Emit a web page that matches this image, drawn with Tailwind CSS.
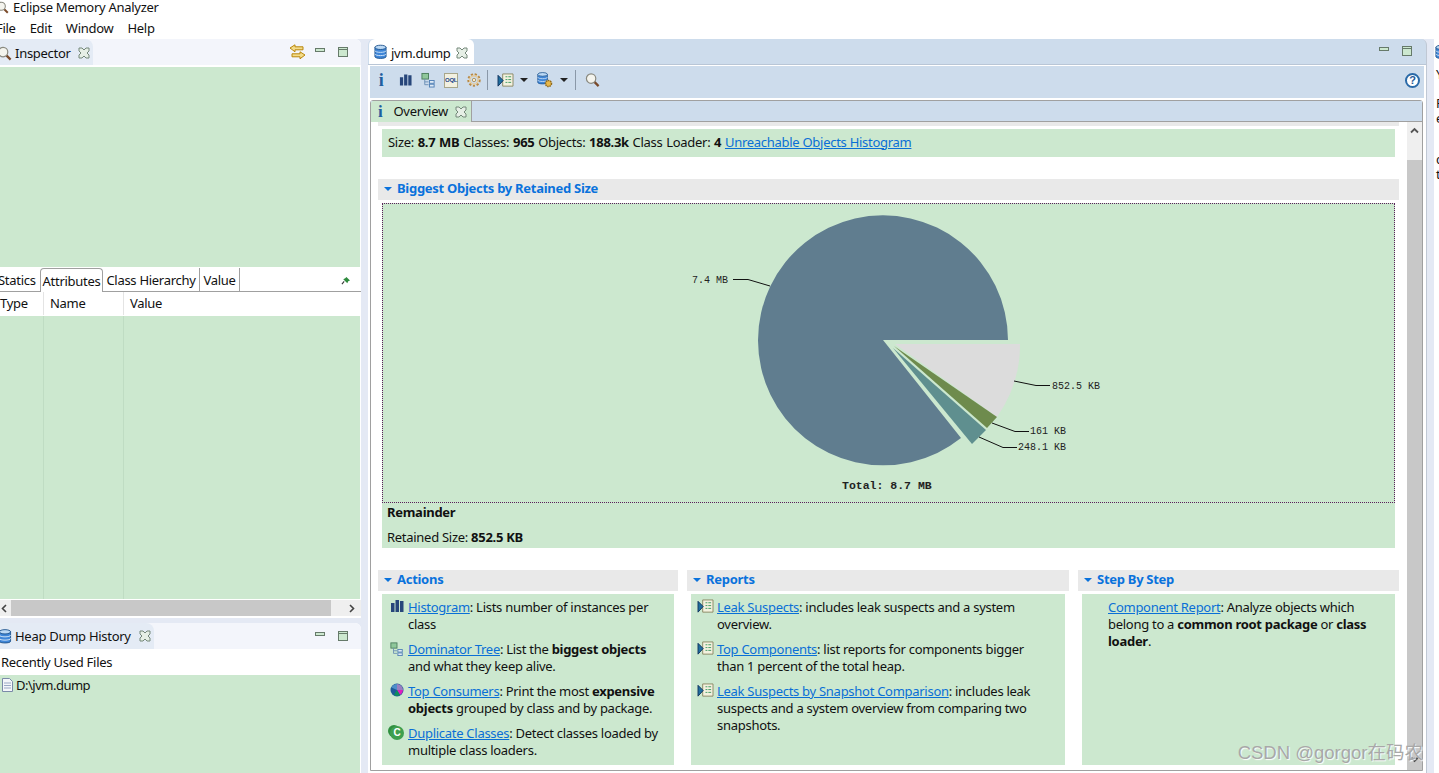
<!DOCTYPE html>
<html lang="en">
<head>
<meta charset="UTF-8">
<title>Eclipse Memory Analyzer</title>
<script src="https://cdn.jsdelivr.net/npm/@tailwindcss/browser@4"></script>
</head>
<body class="w-[1439px] h-[773px] overflow-hidden bg-[#e4e9f4] relative font-['Noto_Sans',sans-serif] text-[13px] leading-[17px] tracking-[-0.28px] text-[#111]">

<svg class="hidden">
  <symbol id="ic-close" viewBox="0 0 12 12"><path d="M1 1h3l2 2 2-2h3v3L9 6l2 2v3H8L6 9l-2 2H1V8l2-2-2-2z" fill="#e6efe6" stroke="#75887a"/></symbol>
  <symbol id="ic-bars" viewBox="0 0 14 14"><path d="M1 4h3.500v9H1zM5.500 1H9v12H5.500zM10 2h3.500v11H10z" fill="#27467a"/></symbol>
  <symbol id="ic-tree" viewBox="0 0 16 16"><rect x="1" y="1" width="7" height="6" fill="#8fc79a" stroke="#4b7d5c"/><path d="M4 7v6h4M4 10h4" fill="none" stroke="#6b8fb5"/><rect x="9" y="8.500" width="5" height="3" fill="#dfeaf5" stroke="#4f7fb5"/><rect x="9" y="12.500" width="5" height="3" fill="#dfeaf5" stroke="#4f7fb5"/></symbol>
  <symbol id="ic-report" viewBox="0 0 18 16"><path d="M6 1h11v13H6z" fill="#f3f1df" stroke="#8a8763"/><path d="M9 4h2M12 4h3M9 7h2M12 7h3M9 10h2M12 10h3" stroke="#3d9a60"/><path d="M1 2.500 6.500 8 1 14z" fill="#1f6f9f" stroke="#12335e"/></symbol>
  <symbol id="ic-db" viewBox="0 0 14 16"><path d="M1 3v10c0 2.500 12 2.500 12 0V3z" fill="#3f86d8" stroke="#20558f"/><ellipse cx="7" cy="3" rx="6" ry="2.300" fill="#bcd9f5" stroke="#20558f"/><path d="M1 6.500c0 2.500 12 2.500 12 0M1 10c0 2.500 12 2.500 12 0" fill="none" stroke="#d5e7f8"/></symbol>
  <symbol id="ic-lens" viewBox="0 0 16 16"><path d="m9.500 9.500 5 5" stroke="#7a4a2a" stroke-width="2.400"/><circle cx="6.500" cy="6.500" r="5" fill="#f4f4ee" stroke="#8a8a80" stroke-width="1.300"/></symbol>
  <symbol id="ic-gear" viewBox="0 0 16 16"><circle cx="8" cy="8" r="5.200" fill="none" stroke="#b98a45" stroke-width="3" stroke-dasharray="2 1.500"/><circle cx="8" cy="8" r="4.200" fill="none" stroke="#e6cfa4" stroke-width="1.500"/><circle cx="8" cy="8" r="1.700" fill="#f6ecd2" stroke="#9a7a3a" stroke-width=".7"/></symbol>
  <symbol id="ic-min" viewBox="0 0 11 6"><rect x=".5" y="1.500" width="9" height="3" fill="#cce8cf" stroke="#667a6a"/></symbol>
  <symbol id="ic-max" viewBox="0 0 11 11"><rect x=".5" y=".5" width="9" height="9" fill="#cce8cf" stroke="#667a6a"/><path d="M.5 2.500h9" stroke="#667a6a"/></symbol>
</svg>

<header class="h-[39px] bg-white">
  <div class="h-[15px] flex items-center gap-[4px] -ml-[4px]">
    <svg class="w-[13px] h-[13px]"><use href="#ic-lens"/></svg>
    <span>Eclipse Memory Analyzer</span>
  </div>
  <nav class="h-[24px] pt-[5px] -ml-[4px] flex gap-[14px]"><span>File</span><span>Edit</span><span>Window</span><span>Help</span></nav>
</header>

<div class="h-[734px] flex">
  <!-- left column -->
  <div class="w-[361px] shrink-0 flex flex-col gap-[5px]">
    <section class="h-[579px] bg-white rounded-tr-[6px] flex flex-col overflow-hidden">
      <div class="h-[26px] bg-[#f3f5fb] flex items-stretch pr-[12px] shrink-0">
        <div class="w-[96px] bg-[#e4ebf5] rounded-tr-[8px] flex items-center gap-[3px] -ml-[3px] pt-[2px]">
          <svg class="w-[15px] h-[15px]"><use href="#ic-lens"/></svg>
          <span>Inspector</span>
          <svg class="w-[12px] h-[12px] ml-[4px]"><use href="#ic-close"/></svg>
        </div>
        <div class="ml-auto flex items-center">
          <svg class="w-[17px] h-[16px]" viewBox="0 0 17 16"><path d="M1 4 6 .8v2h8v3H6v2zM16 11l-5-3.200v2H3v3h8v2z" fill="#f3dc8a" stroke="#b8860b"/></svg>
          <svg class="w-[11px] h-[6px] ml-[9px] -mt-[5px]"><use href="#ic-min"/></svg>
          <svg class="w-[11px] h-[11px] ml-[12px]"><use href="#ic-max"/></svg>
        </div>
      </div>
      <div class="h-[2px] shrink-0"></div>
      <div class="h-[200px] bg-[#cce8cf] mr-[1px] shrink-0"></div>
      <div class="h-[25px] shrink-0 flex items-end border-b border-[#a0a0a0] relative">
        <span class="w-[42px] h-[23px] pt-[2px] flex items-center -ml-[2px] relative">Statics</span>
        <span class="w-[63px] h-[24px] -mb-[1px] pt-[1px] bg-white border border-b-0 border-[#a0a0a0] rounded-t-[4px] flex items-center justify-center">Attributes</span>
        <span class="w-[97px] h-[23px] pt-[2px] border-r border-[#a0a0a0] flex items-center justify-center">Class Hierarchy</span>
        <span class="w-[40px] h-[23px] pt-[2px] border-r border-[#a0a0a0] flex items-center justify-center">Value</span>
        <svg class="ml-auto mr-[11px] mb-[6px] w-[9px] h-[9px]" viewBox="0 0 10 10"><path d="M6 1 10 5 8 5.800 7 8 2.500 3.500 4.700 2.500z" fill="#2e8b3d"/><path d="M3.500 6 1 9" stroke="#333" stroke-width="1.200"/></svg>
      </div>
      <div class="h-[24px] pb-[1px] shrink-0 flex">
        <span class="w-[44px] border-r border-[#e4e4e4] flex items-center">Type</span>
        <span class="w-[80px] border-r border-[#e4e4e4] flex items-center pl-[6px]">Name</span>
        <span class="flex-1 flex items-center pl-[6px]">Value</span>
      </div>
      <div class="h-[283px] shrink-0 mr-[1px] bg-[#cce8cf] flex">
        <div class="w-[44px] border-r border-[#bfdcc3]"></div>
        <div class="w-[80px] border-r border-[#bfdcc3]"></div>
      </div>
      <div class="h-[16px] mt-[1px] shrink-0 bg-[#efefef] flex items-center">
        <svg class="w-[11px] h-[11px] shrink-0" viewBox="0 0 11 11"><path d="M6 2 2.500 5.500 6 9" fill="none" stroke="#444" stroke-width="1.600"/></svg>
        <div class="w-[320px] h-full bg-[#c8c8c8]"></div>
        <svg class="w-[11px] h-[11px] ml-[16px]" viewBox="0 0 11 11"><path d="M3 2l3.500 3.500L3 9" fill="none" stroke="#444" stroke-width="1.600"/></svg>
      </div>
    </section>
    <section class="h-[150px] bg-white rounded-tr-[6px] flex flex-col overflow-hidden">
      <div class="h-[26px] bg-[#f3f5fb] flex items-stretch pr-[12px] shrink-0">
        <div class="w-[157px] bg-[#e4ebf5] rounded-tr-[8px] flex items-center gap-[2px] -ml-[3px]">
          <svg class="w-[16px] h-[15px]" viewBox="0 0 14 16"><use href="#ic-db"/></svg>
          <span>Heap Dump History</span>
          <svg class="w-[12px] h-[12px] ml-[6px]"><use href="#ic-close"/></svg>
        </div>
        <div class="ml-auto flex items-center">
          <svg class="w-[11px] h-[6px] -mt-[5px]"><use href="#ic-min"/></svg>
          <svg class="w-[11px] h-[11px] ml-[12px]"><use href="#ic-max"/></svg>
        </div>
      </div>
      <div class="h-[26px] flex items-center pl-[1px] shrink-0">Recently Used Files</div>
      <div class="flex-1 bg-[#cce8cf] mr-[1px] pt-[2px] flex items-start gap-[3px] pl-[2px]">
        <svg class="w-[11px] h-[14px] mt-[1px] shrink-0" viewBox="0 0 11 14"><path d="M.5.500h7l3 3v10H.500z" fill="#f4f6fa" stroke="#7b8aa8"/><path d="M2 5h7M2 7.500h7M2 10h7" stroke="#9aa8c4"/></svg>
        <span class="leading-[17px] tracking-[-0.5px]">D:\jvm.dump</span>
      </div>
    </section>
  </div>

  <!-- editor -->
  <main class="w-[1059px] ml-[7px] shrink-0 bg-[#cddcec] rounded-t-[6px] flex flex-col border-r border-[#c0c8d4] overflow-hidden">
    <div class="h-[26px] shrink-0 flex items-stretch pr-[13px] border-b border-[#b9c6d6]">
      <div class="w-[105px] ml-[1px] bg-white rounded-t-[6px] flex items-center pl-[5px] gap-[4px] pt-[3px]">
        <svg class="w-[13px] h-[16px] -mt-[3px]"><use href="#ic-db"/></svg>
        <span>jvm.dump</span>
        <svg class="w-[12px] h-[12px] ml-[1px]"><use href="#ic-close"/></svg>
      </div>
      <div class="ml-auto flex items-center">
        <svg class="w-[11px] h-[6px] -mt-[5px]"><use href="#ic-min"/></svg>
        <svg class="w-[11px] h-[11px] ml-[12px]"><use href="#ic-max"/></svg>
      </div>
    </div>
    <div class="flex-1 bg-white pl-[2px] pr-[2px] pt-[1px] min-h-0 flex flex-col">
      <div class="h-[32px] pb-[4px] shrink-0 bg-[#cddcec] flex items-center">
        <span class="w-[22px] text-center text-[#1f5f9f] font-['Liberation_Serif',serif] font-bold text-[18px]">i</span>
        <svg class="w-[13px] h-[14px] ml-[7px]"><use href="#ic-bars"/></svg>
        <svg class="w-[15px] h-[16px] ml-[9px]"><use href="#ic-tree"/></svg>
        <span class="ml-[8px] w-[14px] h-[15px] bg-[#f2f0e0] border border-[#a8a68a] text-[6px] leading-[13px] text-center font-bold text-[#23458a] font-['Liberation_Sans',sans-serif]">OQL</span>
        <svg class="w-[16px] h-[16px] ml-[8px]"><use href="#ic-gear"/></svg>
        <span class="w-px h-[20px] bg-[#8a98a8] ml-[5px]"></span>
        <svg class="w-[17px] h-[15px] ml-[9px]"><use href="#ic-report"/></svg>
        <svg class="w-[8px] h-[4px] ml-[6px]" viewBox="0 0 8 4"><path d="M0 0h8L4 4z" fill="#222"/></svg>
        <svg class="w-[16px] h-[16px] ml-[9px]" viewBox="0 0 16 16"><g transform="scale(.8)"><path d="M1 3v10c0 2.500 12 2.500 12 0V3z" fill="#3f86d8" stroke="#20558f"/><ellipse cx="7" cy="3" rx="6" ry="2.300" fill="#bcd9f5" stroke="#20558f"/><path d="M1 6.500c0 2.500 12 2.500 12 0M1 10c0 2.500 12 2.500 12 0" fill="none" stroke="#d5e7f8"/></g><circle cx="11.500" cy="11.500" r="3" fill="#e8b84a" stroke="#8f6a1f" stroke-width="1.500" stroke-dasharray="1.500 .7"/></svg>
        <svg class="w-[8px] h-[4px] ml-[7px]" viewBox="0 0 8 4"><path d="M0 0h8L4 4z" fill="#222"/></svg>
        <span class="w-px h-[20px] bg-[#8a98a8] ml-[7px]"></span>
        <svg class="w-[15px] h-[16px] ml-[9px]"><use href="#ic-lens"/></svg>
        <span class="ml-auto mr-[4px] w-[15px] h-[15px] rounded-full border-2 border-[#2a6aa8] bg-white text-[#1f5a98] text-[11px] leading-[11px] font-bold text-center font-['Liberation_Sans',sans-serif]">?</span>
      </div>
      <div class="h-[2px] shrink-0"></div>
      <div class="flex-1 min-h-0 border border-[#a0a0a0] rounded-t-[3px] flex flex-col mb-[2px] mr-[1px]">
        <div class="h-[21px] shrink-0 bg-[#cddcec] border-b border-[#a0a0a0] flex">
          <div class="w-[101px] h-[21px] bg-[#cce8cf] border-r border-[#a0a0a0] rounded-tl-[3px] flex items-center pl-[7px] gap-[11px]">
            <span class="text-[#1f5f9f] font-['Liberation_Serif',serif] font-bold text-[17px]">i</span>
            <span>Overview</span>
            <svg class="w-[12px] h-[12px] -ml-[4px]"><use href="#ic-close"/></svg>
          </div>
        </div>
        <div class="flex-1 min-h-0 flex bg-white">
          <div class="w-[1035px] shrink-0 pl-[7px] pr-[7px] overflow-hidden">
            <div class="h-[4px] bg-[#e9e9e9] w-[1021px]"></div>
            <div class="ml-[4px] mt-[3px] h-[28px] pb-[2px] bg-[#cce8cf] flex items-center pl-[6px] w-[1013px]"><span class="whitespace-pre [word-spacing:0.6px]">Size: <b>8.7 MB</b> Classes: <b>965</b> Objects: <b>188.3k</b> Class Loader: <b>4</b> <a class="text-[#0a6fd6] underline [word-spacing:0]">Unreachable Objects Histogram</a></span></div>

            <div class="mt-[22px] h-[21px] pb-[2px] bg-[#e9e9e9] w-[1021px] flex items-center pl-[6px] gap-[5px] font-bold text-[#0a72dc]">
              <svg class="w-[8px] h-[4px]" viewBox="0 0 8 4"><path d="M0 0h8L4 4z" fill="#0a72dc"/></svg>Biggest Objects by Retained Size
            </div>
            <div class="ml-[4px] mt-[3px] w-[1013px] bg-[#cce8cf]">
              <div class="h-[300px] border border-dotted border-[#5a1f5a]">
                <svg class="block" width="1011" height="298" viewBox="383 204 1011 298">
                  <path d="M883 340H1008A125 125 0 1 0 961 438Z" fill="#607d8f"/>
                  <path d="M895 344H1020A125 125 0 0 1 997 417Z" fill="#dcdcdc"/>
                  <path d="M894 346 997 417 987 428Z" fill="#6e8b4d"/>
                  <path d="M893 348 986 430 972 444Z" fill="#5f8f8f"/>
                  <g fill="none" stroke="#111">
                    <path d="M733 279.500H748L770 286"/>
                    <path d="M1014 381 1036 385.500H1050"/>
                    <path d="M992 423 1015 431.500H1029"/>
                    <path d="M979 437 1003 447.500H1017"/>
                  </g>
                  <g font-family="Liberation Mono, monospace" font-size="10" fill="#222" letter-spacing="0">
                    <text x="692" y="283">7.4 MB</text>
                    <text x="1052" y="389">852.5 KB</text>
                    <text x="1030" y="434">161 KB</text>
                    <text x="1018" y="450">248.1 KB</text>
                    <text x="842" y="489" font-weight="bold" font-size="11.500">Total: 8.7 MB</text>
                  </g>
                </svg>
              </div>
              <div class="h-[45px] pl-[5px]">
                <div class="font-bold h-[18px] flex items-center">Remainder</div>
                <div class="h-[18px] mt-[7px] flex items-center"><span class="whitespace-pre">Retained Size: <b>852.5 KB</b></span></div>
              </div>
            </div>

            <div class="mt-[22px] flex gap-[9px] w-[1021px]">
              <section class="w-[300px] shrink-0">
                <div class="h-[21px] pb-[2px] bg-[#e9e9e9] flex items-center pl-[6px] gap-[5px] font-bold text-[#0a72dc]"><svg class="w-[8px] h-[4px]" viewBox="0 0 8 4"><path d="M0 0h8L4 4z" fill="#0a72dc"/></svg>Actions</div>
                <div class="mx-[4px] mt-[3px] h-[171px] bg-[#cce8cf] pt-[5px] pl-[8px] pr-[6px] flex flex-col gap-[8px]">
                  <div class="flex gap-[4px]"><svg class="w-[14px] h-[14px] shrink-0"><use href="#ic-bars"/></svg><p><a class="text-[#0a6fd6] underline">Histogram</a>: Lists number of instances per class</p></div>
                  <div class="flex gap-[4px]"><svg class="w-[14px] h-[16px] shrink-0"><use href="#ic-tree"/></svg><p><a class="text-[#0a6fd6] underline">Dominator Tree</a>: List the <b>biggest objects</b> and what they keep alive.</p></div>
                  <div class="flex gap-[4px]"><svg class="w-[14px] h-[14px] shrink-0" viewBox="0 0 14 14"><circle cx="7" cy="7" r="6.500" fill="#1f5a9a"/><path d="M7 7V1a6 6 0 0 1 6 6z" fill="#9a7fc0"/><path d="M7 7 1.500 4.500A6 6 0 0 1 7 1z" fill="#4f8fc9"/><path d="M7 7h6a6 6 0 0 1-3 5z" fill="#e020c0"/><path d="M7 7l3 5a6 6 0 0 1-6 0z" fill="#0f8f5f"/></svg><p><a class="text-[#0a6fd6] underline">Top Consumers</a>: Print the most <b>expensive objects</b> grouped by class and by package.</p></div>
                  <div class="flex gap-[4px]"><span class="w-[14px] h-[16px] shrink-0 relative"><span class="absolute -left-[2px] top-0 w-[12px] h-[12px] rounded-full bg-[#2f8f3f]"></span><span class="absolute left-0 top-[1px] w-[14px] h-[14px] rounded-full bg-[#3f9f4f] text-white text-[10px] leading-[14px] font-bold text-center font-['Liberation_Sans',sans-serif]">C</span></span><p><a class="text-[#0a6fd6] underline">Duplicate Classes</a>: Detect classes loaded by multiple class loaders.</p></div>
                </div>
              </section>
              <section class="w-[382px] shrink-0">
                <div class="h-[21px] pb-[2px] bg-[#e9e9e9] flex items-center pl-[6px] gap-[5px] font-bold text-[#0a72dc]"><svg class="w-[8px] h-[4px]" viewBox="0 0 8 4"><path d="M0 0h8L4 4z" fill="#0a72dc"/></svg>Reports</div>
                <div class="mx-[4px] mt-[3px] h-[171px] bg-[#cce8cf] pt-[5px] pl-[6px] pr-[16px] flex flex-col gap-[8px]">
                  <div class="flex gap-[3px]"><svg class="w-[17px] h-[15px] shrink-0"><use href="#ic-report"/></svg><p><a class="text-[#0a6fd6] underline">Leak Suspects</a>: includes leak suspects and a system overview.</p></div>
                  <div class="flex gap-[3px]"><svg class="w-[17px] h-[15px] shrink-0"><use href="#ic-report"/></svg><p><a class="text-[#0a6fd6] underline">Top Components</a>: list reports for components bigger than 1 percent of the total heap.</p></div>
                  <div class="flex gap-[3px]"><svg class="w-[17px] h-[15px] shrink-0"><use href="#ic-report"/></svg><p><a class="text-[#0a6fd6] underline">Leak Suspects by Snapshot Comparison</a>: includes leak suspects and a system overview from comparing two snapshots.</p></div>
                </div>
              </section>
              <section class="w-[321px] shrink-0">
                <div class="h-[21px] pb-[2px] bg-[#e9e9e9] flex items-center pl-[6px] gap-[5px] font-bold text-[#0a72dc]"><svg class="w-[8px] h-[4px]" viewBox="0 0 8 4"><path d="M0 0h8L4 4z" fill="#0a72dc"/></svg>Step By Step</div>
                <div class="mx-[4px] mt-[3px] h-[171px] bg-[#cce8cf] pt-[5px] pl-[26px] pr-[12px]">
                  <p><a class="text-[#0a6fd6] underline">Component Report</a>: Analyze objects which belong to a <b>common root package</b> or <b>class loader</b>.</p>
                </div>
              </section>
            </div>
          </div>
          <div class="w-[15px] shrink-0 ml-[1px] bg-[#c8c8c8] flex flex-col justify-between">
            <div class="h-[38px] bg-[#efefef] flex justify-center pt-[5px]"><svg class="w-[9px] h-[7px]" viewBox="0 0 9 7"><path d="M1 5.500 4.500 2 8 5.500" fill="none" stroke="#555" stroke-width="1.800"/></svg></div>
            <div class="h-[14px] flex justify-center"><svg class="w-[9px] h-[7px]" viewBox="0 0 9 7"><path d="M1 1.500 4.500 5 8 1.500" fill="none" stroke="#444" stroke-width="1.800"/></svg></div>
          </div>
        </div>
      </div>
    </div>
  </main>

  <!-- clipped neighbour view -->
  <aside class="w-[5px] ml-[7px] shrink-0 bg-white overflow-hidden pl-[2px] text-[13px]">
    <svg class="w-[13px] h-[16px] mt-[5px] -ml-[1px]"><use href="#ic-db"/></svg>
    <div class="mt-[6px]">Y</div>
    <div class="mt-[12px]">F</div>
    <div class="-mt-[2px]">e</div>
    <div class="mt-[24px]">c</div>
    <div class="-mt-[2px]">t</div>
  </aside>
</div>

<div class="absolute right-[16px] bottom-[9px] text-[18.5px] leading-[22px] tracking-normal text-[#a8a8a8] font-['Liberation_Sans','Noto_Sans_CJK_SC',sans-serif] [text-shadow:1px_1px_1px_#fff]">CSDN @gorgor在码农</div>
</body>
</html>
